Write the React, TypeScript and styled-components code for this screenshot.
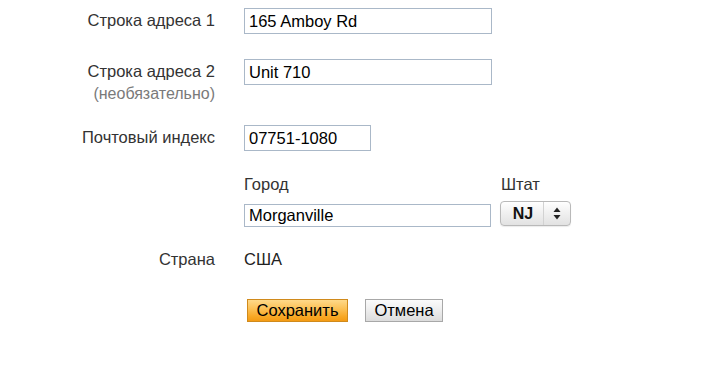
import React from "react";
import styled, { createGlobalStyle } from "styled-components";

const Global = createGlobalStyle`
  html, body { margin: 0; padding: 0; background: #ffffff; }
  body { font-family: "Liberation Sans", Arial, Helvetica, sans-serif; }
`;

const Form = styled.form`
  display: flex;
  flex-direction: column;
  width: 717px;
  padding-top: 8px;
  box-sizing: border-box;
`;

const Row = styled.div<{ $gap: number }>`
  display: grid;
  grid-template-columns: 215px 1fr;
  column-gap: 29px;
  align-items: start;
  margin-bottom: ${(p) => p.$gap}px;
`;

const Label = styled.div<{ $top?: number }>`
  text-align: right;
  font-size: 16.5px;
  line-height: 18px;
  color: #333333;
  padding-top: ${(p) => p.$top ?? 3}px;
`;

const SubLabel = styled.div`
  color: #7a7a7a;
  font-size: 16px;
  margin-top: 5px;
`;

const TextInput = styled.input<{ $w: number; $h?: number }>`
  box-sizing: border-box;
  width: ${(p) => p.$w}px;
  height: ${(p) => p.$h ?? 26}px;
  border: 1px solid #aab8c8;
  border-radius: 0;
  padding: 0 4px;
  margin: 0;
  font-family: inherit;
  font-size: 16.5px;
  color: #000000;
  background: #ffffff;
  outline: none;
`;

const Value = styled.div`
  font-size: 16.5px;
  line-height: 18px;
  color: #222222;
`;

const CityState = styled.div`
  display: flex;
  align-items: flex-end;
  gap: 9px;
`;

const Field = styled.div`
  display: flex;
  flex-direction: column;
`;

const FieldLabel = styled.div`
  font-size: 16.5px;
  line-height: 18px;
  color: #333333;
  margin-bottom: 11px;
`;

const StateLabel = styled(FieldLabel)`
  margin-bottom: 8px;
  padding-left: 1px;
`;

const Select = styled.div`
  box-sizing: border-box;
  width: 71px;
  height: 25px;
  margin-bottom: 1px;
  display: flex;
  align-items: stretch;
  border: 1px solid #b9b9b9;
  border-radius: 4px;
  background: linear-gradient(#ffffff, #f1f1f1 45%, #e2e2e2);
  box-shadow: 0 1px 1px rgba(0, 0, 0, 0.08);
`;

const SelectValue = styled.div`
  flex: 1;
  display: flex;
  align-items: center;
  justify-content: center;
  font-size: 16px;
  font-weight: bold;
  color: #111111;
  padding-left: 2px;
`;

const SelectArrows = styled.div`
  width: 26px;
  display: flex;
  align-items: center;
  justify-content: center;
  border-left: 1px solid #d2d2d2;
`;

const Buttons = styled.div`
  display: flex;
  gap: 17px;
  padding-left: 3px;
`;

const Button = styled.button<{ $primary?: boolean; $w: number }>`
  box-sizing: border-box;
  width: ${(p) => p.$w}px;
  height: 23px;
  margin: 0;
  padding: 0;
  font-family: inherit;
  font-size: 16.5px;
  color: #000000;
  border: 1px solid ${(p) => (p.$primary ? "#d08a1c" : "#a8a8a8")};
  border-radius: 0;
  background: ${(p) =>
    p.$primary
      ? "linear-gradient(#fed98a, #fcc258 40%, #f8a723 80%, #f49b14)"
      : "linear-gradient(#fbfbfb, #ededed 50%, #dcdcdc)"};
  cursor: pointer;
`;

const Arrows = () => (
  <svg width="8" height="13" viewBox="0 0 8 13">
    <path d="M4 0.5 L7.5 5 L0.5 5 Z" fill="#222" />
    <path d="M4 12.5 L7.5 8 L0.5 8 Z" fill="#222" />
  </svg>
);

export default function App() {
  return (
    <>
      <Global />
      <Form onSubmit={(e) => e.preventDefault()}>
        <Row $gap={25}>
          <Label>Строка адреса 1</Label>
          <TextInput $w={248} defaultValue="165 Amboy Rd" />
        </Row>
        <Row $gap={22}>
          <Label>
            Строка адреса 2
            <SubLabel>(необязательно)</SubLabel>
          </Label>
          <TextInput $w={248} defaultValue="Unit 710" />
        </Row>
        <Row $gap={24}>
          <Label>Почтовый индекс</Label>
          <TextInput $w={127} defaultValue="07751-1080" />
        </Row>
        <Row $gap={23}>
          <div />
          <CityState>
            <Field>
              <FieldLabel>Город</FieldLabel>
              <TextInput $w={247} $h={23} defaultValue="Morganville" />
            </Field>
            <Field>
              <StateLabel>Штат</StateLabel>
              <Select>
                <SelectValue>NJ</SelectValue>
                <SelectArrows>
                  <Arrows />
                </SelectArrows>
              </Select>
            </Field>
          </CityState>
        </Row>
        <Row $gap={31}>
          <Label $top={0}>Страна</Label>
          <Value>США</Value>
        </Row>
        <Row $gap={0}>
          <div />
          <Buttons>
            <Button type="submit" $primary $w={101}>
              Сохранить
            </Button>
            <Button type="button" $w={78}>
              Отмена
            </Button>
          </Buttons>
        </Row>
      </Form>
    </>
  );
}
